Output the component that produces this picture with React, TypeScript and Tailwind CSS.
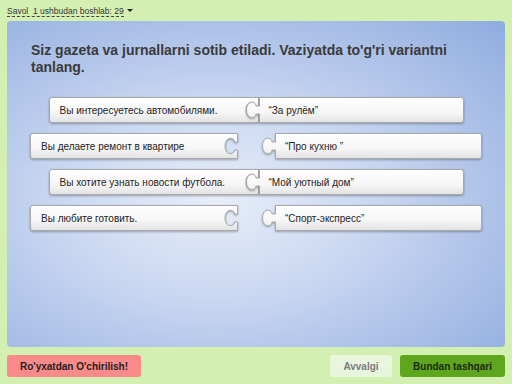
import { useId } from "react"

const rows = [
  { left: "Вы интересуетесь автомобилями.", right: "“За рулём”", joined: true },
  { left: "Вы делаете ремонт в квартире", right: "“Про кухню ”", joined: false },
  { left: "Вы хотите узнать новости футбола.", right: "“Мой уютный дом”", joined: true },
  { left: "Вы любите готовить.", right: "“Спорт-экспресс”", joined: false },
]

const H = 26

function socketPath(w: number) {
  const r = 3
  return `M${r},0.5 H${w - 0.5} V9 H${w - 3.5} C${w - 3.5},4 ${w - 13},3 ${w - 13},13 C${w - 13},23 ${w - 3.5},22 ${w - 3.5},17 H${w - 0.5} V${H - 0.5} H${r} Q0.5,${H - 0.5} 0.5,${H - r} V${r} Q0.5,0.5 ${r},0.5 Z`
}

function knobPath(w: number) {
  const r = 3
  return `M0.5,0.5 H${w - r} Q${w - 0.5},0.5 ${w - 0.5},${r} V${H - r} Q${w - 0.5},${H - 0.5} ${w - r},${H - 0.5} H0.5 V17 H-3 C-3,22 -12.5,23 -12.5,13 C-12.5,3 -3,4 -3,9 H0.5 Z`
}

function Piece({ text, width, kind }: { text: string; width: number; kind: "socket" | "knob" }) {
  const id = useId().replace(/:/g, "")
  return (
    <div className="relative flex h-[26px] shrink-0 items-center" style={{ width }}>
      <svg
        className="absolute inset-0 h-full w-full overflow-visible drop-shadow-[0_1px_1px_rgba(0,0,0,0.3)]"
        viewBox={`0 0 ${width} ${H}`}
      >
        <defs>
          <linearGradient id={id} x1="0" y1="0" x2="0" y2="1">
            <stop offset="0" stopColor="#ffffff" />
            <stop offset="0.6" stopColor="#f6f6f6" />
            <stop offset="1" stopColor="#e2e2e2" />
          </linearGradient>
        </defs>
        <path d={kind === "socket" ? socketPath(width) : knobPath(width)} fill={`url(#${id})`} stroke="#a9a9a9" strokeWidth="1" />
      </svg>
      <span className={`relative text-[10px] text-[#222] ${kind === "socket" ? "pl-[11px]" : "pl-[10px]"}`}>{text}</span>
    </div>
  )
}

export default function App() {
  return (
    <div className="flex h-[384px] w-[512px] flex-col bg-[#d4efb2] font-['Liberation_Sans',Arial,sans-serif]">
      <div className="flex h-[21px] items-start px-[7px] pt-[6px]">
        <span className="border-b border-dashed border-[#444] text-[8.5px] leading-[10px] text-[#333]">
          {"Savol\u00a0\u00a01 ushbudan boshlab: 29"}
        </span>
        <span className="ml-[3px] mt-[3px] h-0 w-0 border-x-[3px] border-t-[3px] border-x-transparent border-t-[#222]" />
      </div>

      <div className="mx-[7px] flex h-[326px] flex-col rounded-[4px] bg-[radial-gradient(ellipse_at_42%_55%,#e8eef9_0%,#c6d5f0_42%,#8fabdf_100%)] px-[24px] pt-[21px]">
        <h1 className="text-[14px] font-bold leading-[17px] text-[#3a3a3a]">
          Siz gazeta va jurnallarni sotib etiladi. Vaziyatda to'g'ri variantni tanlang.
        </h1>
        <div className="mt-[21px] flex flex-col gap-[10px]">
          {rows.map((r, i) => (
            <div key={i} className={`flex justify-center ${r.joined ? "" : "gap-[37px]"}`}>
              <Piece text={r.left} width={r.joined ? 210 : 208} kind="socket" />
              <Piece text={r.right} width={r.joined ? 205 : 207} kind="knob" />
            </div>
          ))}
        </div>
      </div>

      <div className="mt-[8px] flex px-[7px]">
        <button className="h-[22px] w-[134px] rounded-[3px] bg-[#fb8a8a] text-[10px] font-bold text-[#222]">
          Ro'yxatdan O'chirilish!
        </button>
        <div className="ml-auto flex gap-[8px]">
          <button className="h-[22px] w-[62px] rounded-[3px] bg-[#e9f6de] text-[10px] font-bold text-[#7c7c7c]">
            Avvalgi
          </button>
          <button className="h-[22px] w-[105px] rounded-[3px] bg-[#5fa61f] text-[10px] font-bold text-[#1c2a0e]">
            Bundan tashqari
          </button>
        </div>
      </div>
    </div>
  )
}
